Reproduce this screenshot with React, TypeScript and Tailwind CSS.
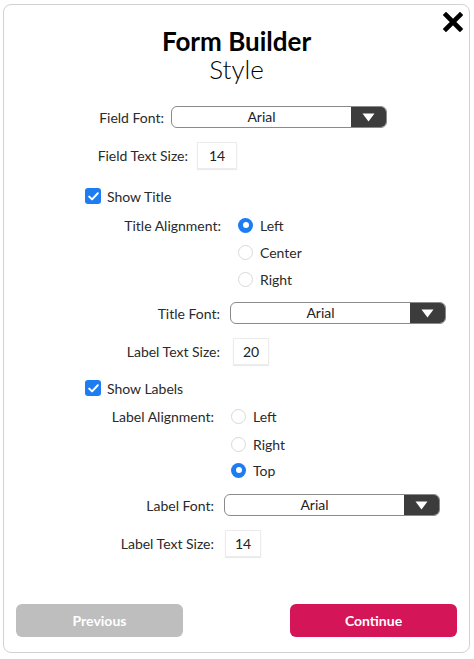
import React from "react";

const font = { fontFamily: "Lato, 'Noto Sans', sans-serif" };

const Select = ({ className }: { className: string }) => (
  <div className={`flex h-[22px] w-[216px] overflow-hidden rounded-[6px] border border-[#8a8a8a] bg-white ${className}`}>
    <div className="flex flex-1 items-center justify-center text-[14px] leading-none text-[#222]">Arial</div>
    <div className="flex w-[35px] items-center justify-center bg-[#3c3c3c]">
      <svg width="13" height="9" viewBox="0 0 13 9">
        <path d="M0.5 0.5 H12.5 L6.5 8.5 Z" fill="#fff" />
      </svg>
    </div>
  </div>
);

const SizeBox = ({ value, className }: { value: string; className: string }) => (
  <div className={`flex h-[27px] items-center justify-center border border-[#ececec] bg-white text-[14px] text-[#222] shadow-[0_1px_1px_rgba(0,0,0,0.08)] ${className}`}>
    {value}
  </div>
);

const Check = () => (
  <div className="flex h-[16px] w-[16px] items-center justify-center rounded-[3px] bg-[#1d7cf2]">
    <svg width="11" height="9" viewBox="0 0 11 9">
      <path d="M1.2 4.6 L4.1 7.4 L9.8 1.3" fill="none" stroke="#fff" strokeWidth="2" strokeLinecap="round" strokeLinejoin="round" />
    </svg>
  </div>
);

const Radio = ({ on }: { on?: boolean }) =>
  on ? (
    <div className="flex h-[15px] w-[15px] items-center justify-center rounded-full bg-[#1d7cf2]">
      <div className="h-[6px] w-[6px] rounded-full bg-white" />
    </div>
  ) : (
    <div className="h-[15px] w-[15px] rounded-full border border-[#d9d9d9] bg-white" />
  );

const RadioRow = ({ label, lw, gap, text, on, className }: { label?: string; lw: string; gap: string; text: string; on?: boolean; className: string }) => (
  <div className={`flex h-[24px] items-center ${className}`}>
    <div className={`${lw} text-right`}>{label}</div>
    <div className={gap}>
      <Radio on={on} />
    </div>
    <div className="ml-[7px]">{text}</div>
  </div>
);

export default function App() {
  return (
    <div className="h-[659px] w-[474px] bg-white pl-[3px] pt-[4px] text-[14px] text-[#2a2a2a]" style={font}>
      <div className="relative flex h-[649px] w-[467px] flex-col rounded-[8px] border border-[#d2d2d2] bg-white">
        <svg className="absolute right-[6px] top-[7px]" width="20" height="20" viewBox="0 0 20 20">
          <path d="M3 3 L17 17 M17 3 L3 17" stroke="#000" strokeWidth="4.6" strokeLinecap="square" />
        </svg>

        <div className="pt-[22px] text-center text-[26px] leading-[28px] text-black">
          <div className="font-bold">Form Builder</div>
          <div className="font-light">Style</div>
        </div>

        <div className="mt-[23px] flex h-[22px] items-center">
          <div className="w-[160px] text-right">Field Font:</div>
          <Select className="ml-[7px]" />
        </div>

        <div className="mt-[14px] flex h-[27px] items-center">
          <div className="w-[184px] text-right">Field Text Size:</div>
          <SizeBox value="14" className="ml-[9px] w-[40px]" />
        </div>

        <div className="ml-[81px] mt-[19px] flex h-[16px] items-center">
          <Check />
          <div className="ml-[6px]">Show Title</div>
        </div>

        <RadioRow className="mt-[9px]" label="Title Alignment:" lw="w-[217px]" gap="ml-[17px]" text="Left" on />
        <RadioRow className="mt-[3px]" lw="w-[217px]" gap="ml-[17px]" text="Center" />
        <RadioRow className="mt-[3px]" lw="w-[217px]" gap="ml-[17px]" text="Right" />

        <div className="mt-[11px] flex h-[22px] items-center">
          <div className="w-[216px] text-right">Title Font:</div>
          <Select className="ml-[10px]" />
        </div>

        <div className="mt-[14px] flex h-[27px] items-center">
          <div className="w-[216px] text-right">Label Text Size:</div>
          <SizeBox value="20" className="ml-[13px] w-[36px]" />
        </div>

        <div className="ml-[81px] mt-[15px] flex h-[16px] items-center">
          <Check />
          <div className="ml-[6px]">Show Labels</div>
        </div>

        <RadioRow className="mt-[8px]" label="Label Alignment:" lw="w-[210px]" gap="ml-[17px]" text="Left" />
        <RadioRow className="mt-[4px]" lw="w-[210px]" gap="ml-[17px]" text="Right" />
        <RadioRow className="mt-[2px]" lw="w-[210px]" gap="ml-[17px]" text="Top" on />

        <div className="mt-[12px] flex h-[22px] items-center">
          <div className="w-[210px] text-right">Label Font:</div>
          <Select className="ml-[10px]" />
        </div>

        <div className="mt-[14px] flex h-[27px] items-center">
          <div className="w-[210px] text-right">Label Text Size:</div>
          <SizeBox value="14" className="ml-[11px] w-[36px]" />
        </div>

        <div className="mt-auto mb-[15px] flex justify-between px-[12px]">
          <button className="h-[33px] w-[167px] rounded-[6px] bg-[#bebebe] text-[14px] font-bold text-white">Previous</button>
          <button className="h-[33px] w-[167px] rounded-[6px] bg-[#d41558] text-[14px] font-bold text-white">Continue</button>
        </div>
      </div>
    </div>
  );
}
